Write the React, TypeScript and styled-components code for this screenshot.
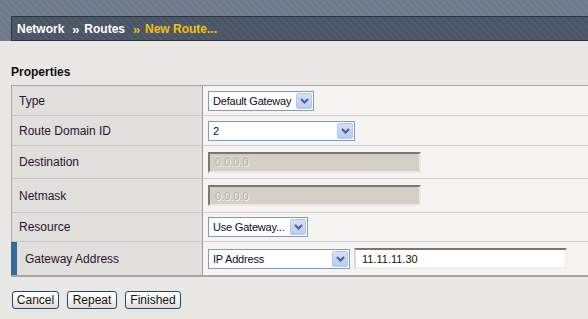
import React from "react";
import styled, { createGlobalStyle } from "styled-components";

const Global = createGlobalStyle`
  html, body { margin: 0; padding: 0; }
  body {
    background: #e9e8e4;
    font-family: "Liberation Sans", Arial, sans-serif;
    font-size: 12px;
    color: #1a1a1a;
    width: 588px;
    overflow: hidden;
  }
`;

const Header = styled.header`
  height: 41px;
  padding-top: 16px;
  box-sizing: border-box;
  background: #6c7a89
    repeating-linear-gradient(
      45deg,
      rgba(255, 255, 255, 0.05) 0px,
      rgba(255, 255, 255, 0.05) 2px,
      rgba(0, 0, 0, 0) 2px,
      rgba(0, 0, 0, 0) 5px
    );
`;

const Crumbs = styled.nav`
  margin-left: 11px;
  height: 25px;
  box-sizing: border-box;
  border-top: 1px solid #2e3540;
  border-bottom: 1px solid #2e3540;
  border-left: 1px solid #2e3540;
  background: #4a5666
    repeating-linear-gradient(
      45deg,
      rgba(255, 255, 255, 0.03) 0px,
      rgba(255, 255, 255, 0.03) 2px,
      rgba(0, 0, 0, 0) 2px,
      rgba(0, 0, 0, 0) 5px
    );
  display: flex;
  align-items: center;
  padding-left: 5px;
  font-weight: bold;
  font-size: 12px;
  white-space: nowrap;
`;

const Crumb = styled.span<{ $current?: boolean }>`
  color: ${(p) => (p.$current ? "#f4c20d" : "#ffffff")};
`;

const Sep = styled.span<{ $current?: boolean }>`
  color: ${(p) => (p.$current ? "#f4c20d" : "#ffffff")};
  font-size: 12px;
  margin: 2px 6px 0 8px;
  letter-spacing: -1px;
`;

const Main = styled.main`
  padding: 24px 0 0 11px;
`;

const Title = styled.h2`
  margin: 0 0 6px 0;
  font-size: 12px;
  font-weight: bold;
  color: #111;
  line-height: 14px;
`;

const Table = styled.div`
  display: grid;
  grid-template-columns: 191px 1fr;
  border-top: 1px solid #a9a7a2;
  border-left: 1px solid #a9a7a2;
  border-bottom: 2px solid #a9a7a2;
`;

const Label = styled.div<{ $h: number; $marked?: boolean; $last?: boolean }>`
  height: ${(p) => p.$h}px;
  box-sizing: border-box;
  background: #e0dfdb;
  border-right: 1px solid #a09e99;
  border-bottom: ${(p) => (p.$last ? "none" : "1px solid #c8c6c1")};
  display: flex;
  align-items: center;
  padding-left: 7px;
  color: #2a1436;
  white-space: nowrap;
  ${(p) =>
    p.$marked
      ? `border-left: 6px solid #336b9c; margin-left: -1px; padding-left: 8px;`
      : ""}
`;

const Value = styled.div<{ $h: number; $last?: boolean }>`
  height: ${(p) => p.$h}px;
  box-sizing: border-box;
  background: #f5f4f2;
  border-bottom: ${(p) => (p.$last ? "none" : "1px solid #d2d0cc")};
  display: flex;
  align-items: center;
  padding-left: 5px;
  gap: 4px;
`;

const SelectBox = styled.div<{ $w: number }>`
  width: ${(p) => p.$w}px;
  height: 20px;
  box-sizing: border-box;
  border: 1px solid #7f9db9;
  background: #fff;
  display: flex;
  align-items: center;
  justify-content: space-between;
  padding: 1px 1px 1px 4px;
  color: #120a1a;
  font-size: 11px;
  letter-spacing: -0.2px;
  white-space: nowrap;
`;

const Arrow = styled.span`
  width: 16px;
  height: 16px;
  flex: none;
  box-sizing: border-box;
  border: 1px solid #b6c8ee;
  border-radius: 2px;
  background: linear-gradient(#d4e0f8, #b7cbf3);
  display: flex;
  align-items: center;
  justify-content: center;
`;

const TextInput = styled.div<{ $w: number; $disabled?: boolean }>`
  width: ${(p) => p.$w}px;
  height: 21px;
  box-sizing: border-box;
  border-top: 2px solid #7a776e;
  border-left: 2px solid ${(p) => (p.$disabled ? "#7d7a72" : "#d9d7d0")};
  border-right: 2px solid ${(p) => (p.$disabled ? "#ebe9e4" : "#efeee6")};
  border-bottom: 2px solid ${(p) => (p.$disabled ? "#ebe9e4" : "#efeee6")};
  background: ${(p) => (p.$disabled ? "#d4d0c8" : "#ffffff")};
  color: ${(p) => (p.$disabled ? "#b3b0a6" : "#111")};
  text-shadow: ${(p) => (p.$disabled ? "1px 1px 0 #f4f3ee" : "none")};
  display: flex;
  align-items: center;
  padding-left: ${(p) => (p.$disabled ? "5px" : "6px")};
  font-size: 11px;
  white-space: nowrap;
`;

const Buttons = styled.div`
  display: flex;
  gap: 8px;
  padding: 14px 0 0 1px;
`;

const Button = styled.button<{ $w: number }>`
  width: ${(p) => p.$w}px;
  height: 18px;
  box-sizing: border-box;
  border: 1px solid #1c4a78;
  border-radius: 3px;
  background: linear-gradient(#ffffff 0%, #f3f2ee 60%, #dedbd2 100%);
  font-family: "Liberation Sans", Arial, sans-serif;
  font-size: 12px;
  color: #111;
  padding: 0;
  line-height: 15px;
`;

function Chevron() {
  return (
    <svg width="9" height="6" viewBox="0 0 9 6">
      <path d="M1 1 L4.5 4.5 L8 1" fill="none" stroke="#4c5f86" strokeWidth="2" />
    </svg>
  );
}

function Select({ w, value }: { w: number; value: string }) {
  return (
    <SelectBox $w={w}>
      <span>{value}</span>
      <Arrow>
        <Chevron />
      </Arrow>
    </SelectBox>
  );
}

export default function App() {
  return (
    <>
      <Global />
      <Header>
        <Crumbs>
          <Crumb>Network</Crumb>
          <Sep>››</Sep>
          <Crumb>Routes</Crumb>
          <Sep $current>››</Sep>
          <Crumb $current>New Route...</Crumb>
        </Crumbs>
      </Header>
      <Main>
        <Title>Properties</Title>
        <Table>
          <Label $h={30}>Type</Label>
          <Value $h={30}>
            <Select w={106} value="Default Gateway" />
          </Value>
          <Label $h={30}>Route Domain ID</Label>
          <Value $h={30}>
            <Select w={147} value="2" />
          </Value>
          <Label $h={33}>Destination</Label>
          <Value $h={33}>
            <TextInput $w={213} $disabled>0.0.0.0</TextInput>
          </Value>
          <Label $h={34}>Netmask</Label>
          <Value $h={34}>
            <TextInput $w={213} $disabled>0.0.0.0</TextInput>
          </Value>
          <Label $h={29}>Resource</Label>
          <Value $h={29}>
            <Select w={100} value="Use Gateway..." />
          </Value>
          <Label $h={33} $marked $last>
            Gateway Address
          </Label>
          <Value $h={33} $last>
            <Select w={142} value="IP Address" />
            <TextInput $w={213}>11.11.11.30</TextInput>
          </Value>
        </Table>
        <Buttons>
          <Button $w={47}>Cancel</Button>
          <Button $w={50}>Repeat</Button>
          <Button $w={56}>Finished</Button>
        </Buttons>
      </Main>
    </>
  );
}
